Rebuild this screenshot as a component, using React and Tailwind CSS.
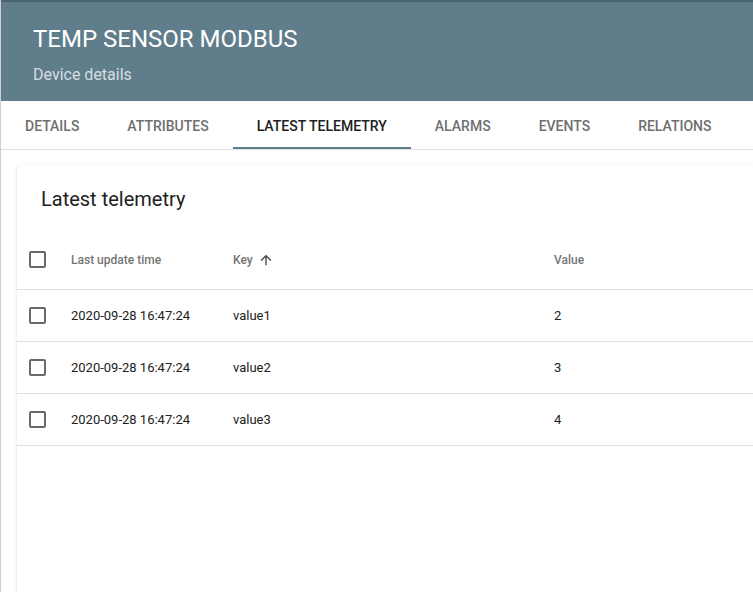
import React from "react"

const tabs = ["DETAILS", "ATTRIBUTES", "LATEST TELEMETRY", "ALARMS", "EVENTS", "RELATIONS"]

const rows = [
    {time: "2020-09-28 16:47:24", key: "value1", value: "2"},
    {time: "2020-09-28 16:47:24", key: "value2", value: "3"},
    {time: "2020-09-28 16:47:24", key: "value3", value: "4"},
]

const Checkbox = () => (
    <div className="w-[17px] h-[17px] border-2 border-[#6a6a6a] rounded-[2px] shrink-0"></div>
)

export default function App() {
    return (
        <div className="w-[753px] h-[592px] overflow-hidden bg-white border-l border-[#cfcfcf] font-['Roboto',sans-serif]">
            {/*Header*/}
            <div className="h-[101px] bg-[#607d8b] border-t-2 border-[#4b6470] pl-[32px] pt-[23px]">
                <div className="text-white text-[24px] leading-[28px]">TEMP SENSOR MODBUS</div>
                <div className="text-white/75 text-[16px] leading-[20px] mt-[12px]">Device details</div>
            </div>
            {/*Tabs*/}
            <div className="flex h-[49px] border-b border-[#e0e0e0]">
                {tabs.map((t) => (
                    <div
                        key={t}
                        className={
                            t === "LATEST TELEMETRY"
                                ? "px-6 flex items-center text-[14px] font-medium text-[#212121] border-b-2 border-[#607d8b] pt-[4px] whitespace-nowrap"
                                : "px-6 flex items-center text-[14px] font-medium text-[#6f6f6f] border-b-2 border-transparent pt-[4px] whitespace-nowrap"
                        }
                    >
                        {t}
                    </div>
                ))}
            </div>
            {/*Card*/}
            <div className="pl-[16px] pt-[15px]">
                <div className="bg-white h-[500px] shadow-[0_1px_3px_rgba(0,0,0,0.14),0_0_1px_rgba(0,0,0,0.12)] rounded-tl-[2px]">
                    <div className="h-[68px] flex items-center pl-[24px]">
                        <span className="text-[20px] text-[#212121]">Latest telemetry</span>
                    </div>
                    <div className="h-[57px] pb-[3px] flex items-center border-b border-[#e0e0e0] text-[12px] font-medium text-[#757575]">
                        <div className="w-[54px] pl-[12px]"><Checkbox/></div>
                        <div className="w-[162px]">Last update time</div>
                        <div className="w-[321px] flex items-center gap-[5px]">
                            Key
                            <svg width="16" height="16" viewBox="0 0 24 24" className="text-[#444]">
                                <path fill="currentColor" d="M4 12l1.41 1.41L11 7.83V20h2V7.83l5.58 5.59L20 12l-8-8-8 8z"/>
                            </svg>
                        </div>
                        <div>Value</div>
                    </div>
                    {rows.map((r) => (
                        <div key={r.key} className="h-[52px] flex items-center border-b border-[#e0e0e0] text-[13px] text-[#212121]">
                            <div className="w-[54px] pl-[12px]"><Checkbox/></div>
                            <div className="w-[162px]">{r.time}</div>
                            <div className="w-[321px]">{r.key}</div>
                            <div>{r.value}</div>
                        </div>
                    ))}
                </div>
            </div>
        </div>
    )
}
